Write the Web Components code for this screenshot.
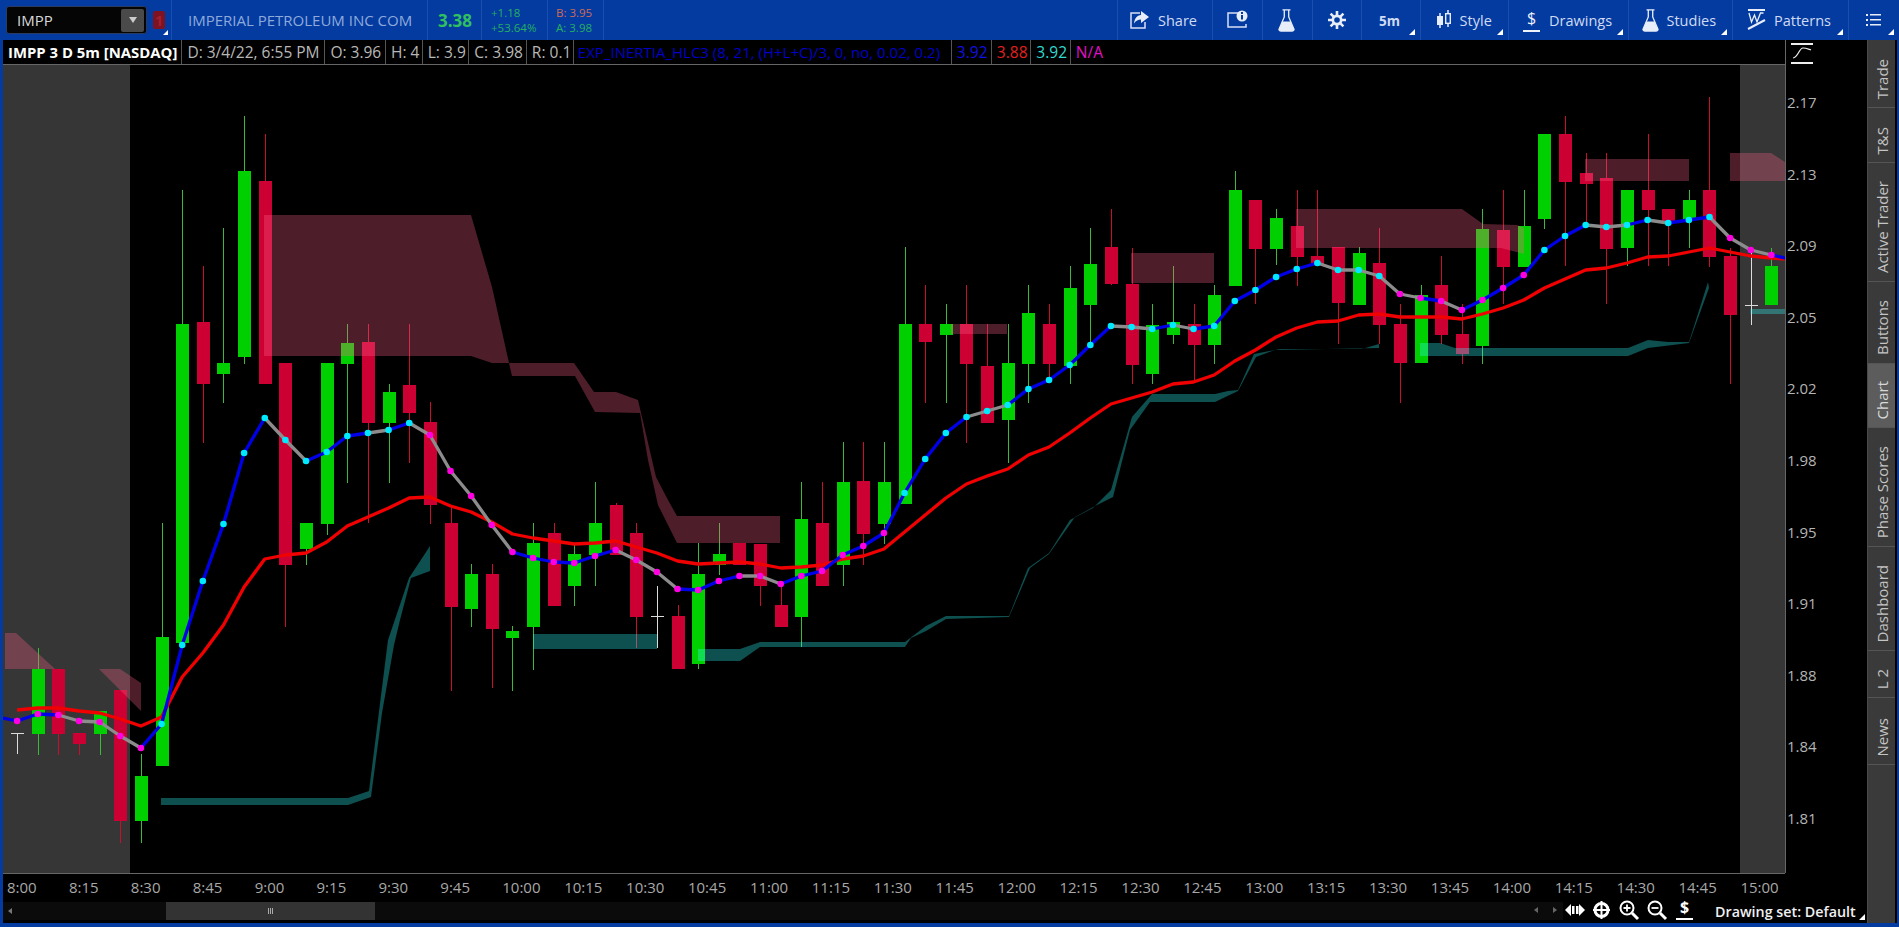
<!DOCTYPE html>
<html><head><meta charset="utf-8"><title>IMPP chart</title>
<style>
html,body{margin:0;padding:0;background:#043ba0;width:1899px;height:927px;overflow:hidden}
body{font-family:"Open Sans","Liberation Sans",sans-serif}
</style></head><body>
<tos-app></tos-app>
<script>
function def(name,css,html,init){
  customElements.define(name,class extends HTMLElement{
    constructor(){super();const r=this.attachShadow({mode:'open'});r.innerHTML='<style>'+css+'</style>'+(typeof html==='function'?html(this):html);}
    connectedCallback(){ if(init) init(this); }
  });
}
const triangle=':host([menu])::after{content:"";position:absolute;right:5px;bottom:5px;width:0;height:0;border-style:solid;border-width:0 0 6px 6px;border-color:transparent transparent #fff transparent}';

def('tos-tool',`:host{display:flex;align-items:center;position:relative;box-sizing:border-box;height:100%;border-left:1px solid #1a4fb0;padding-left:var(--pl,12px);gap:var(--gap,8px);color:#d0dbf2;font-size:14.5px;white-space:nowrap;flex:none;width:var(--w)}`+triangle,'<slot></slot>');

def('tos-dollar',`:host{display:inline-flex;justify-content:center;align-items:center;box-sizing:border-box;width:17px;height:23px;border-bottom:2px solid currentColor;color:#eef2fb;font-size:16px;line-height:1;font-weight:var(--fw,400);padding-bottom:2px;flex:none}`,'$');

def('tos-symbol',`:host{display:flex;align-items:center;flex:none;width:171px;height:100%;position:relative;padding-left:6px;box-sizing:border-box;gap:6px}
.box{width:141px;height:28px;background:#050505;border:1px solid #2a3a60;border-radius:3px;box-sizing:border-box;display:flex;align-items:center;justify-content:space-between;color:#d8d8d8;font-size:15px;padding:0 2px 0 10px}
.btn{width:23px;height:23px;background:#4a4a4a;border-radius:2px;display:flex;align-items:center;justify-content:center}
.btn i{display:block;width:0;height:0;border-style:solid;border-width:6px 4.5px 0 4.5px;border-color:#ccc transparent transparent transparent}
.b{width:12px;height:18px;background:#7d1222;border-radius:2px;color:#a0202f;font-size:15px;font-weight:700;display:flex;align-items:center;justify-content:center;line-height:1}
.c{position:absolute;right:3px;bottom:5px;width:0;height:0;border-style:solid;border-width:0 0 5px 5px;border-color:transparent transparent #fff transparent}`,
`<div class="box"><span>IMPP</span><span class="btn"><i></i></span></div><span class="b">1</span><span class="c"></span>`);

def('tos-quote',`:host{display:flex;flex:none;height:100%;color:#d0d0d0}
.c{border-left:1px solid #1a4fb0;box-sizing:border-box;height:100%;display:flex;flex-direction:column;justify-content:center}
.name{width:256px;padding-left:16px;color:#8eaadb;font-size:15px;white-space:nowrap}
.last{width:54px;padding-left:10px;color:#30c060;font-size:17px;font-weight:700}
.chg{width:66px;padding-left:9px;color:#23b060;font-size:11.5px;line-height:15px}
.ba{width:56px;padding-left:8px;font-size:11.5px;line-height:15px}
.end{width:1px;border-left:1px solid #1a4fb0}
.r{color:#cf6a55}.g{color:#23b060}`,
`<div class="c name">IMPERIAL PETROLEUM INC COM</div><div class="c last">3.38</div><div class="c chg"><span>+1.18</span><span>+53.64%</span></div><div class="c ba"><span class="r">B: 3.95</span><span class="g">A: 3.98</span></div><div class="c end"></div>`);

const ic={
 share:`<svg width="21" height="20" viewBox="0 0 21 20"><path d="M11 3H2v15h14v-6" fill="none" stroke="#d6e0f4" stroke-width="1.5"/><path d="M12 1l8 6-8 6V9.5c-3 0-5 1-7 4 .5-5 3-8 7-8.500z" fill="#e8eef9"/></svg>`,
 info:`<svg width="21" height="20" viewBox="0 0 21 20"><path d="M12 3H1v14h18v-3" fill="none" stroke="#d6e0f4" stroke-width="1.500"/><circle cx="15" cy="6" r="5.500" fill="#e8eef9"/><rect x="14" y="5" width="2" height="4.500" fill="#043ba0"/><rect x="14" y="2" width="2" height="2" fill="#043ba0"/></svg>`,
 flask:`<svg width="17" height="23" viewBox="0 0 19 26"><path d="M5 1h9M7 1v8L1 23q0 2 2 2h13q2 0 2-2L12 9V1" fill="none" stroke="#e8eef9" stroke-width="1.500"/><path d="M5 14h9l4 9q0 2-2 2H3q-2 0-2-2z" fill="#e8eef9"/></svg>`,
 gear:`<svg width="18" height="18" viewBox="0 0 18 18"><g stroke="#e8eef9" stroke-width="2.600"><path d="M9 0v18M0 9h18M2.600 2.600l12.800 12.800M15.400 2.600L2.600 15.400"/></g><circle cx="9" cy="9" r="5.500" fill="#e8eef9"/><circle cx="9" cy="9" r="2.800" fill="#043ba0"/></svg>`,
 style:`<svg width="16" height="22" viewBox="0 0 16 22"><path d="M4 4v15" stroke="#e8eef9" stroke-width="1.500"/><rect x="1" y="7" width="6" height="9" fill="#e8eef9"/><path d="M12 1v17" stroke="#e8eef9" stroke-width="1.500"/><rect x="9.700" y="4.700" width="4.600" height="9.600" fill="#043ba0" stroke="#e8eef9" stroke-width="1.400"/></svg>`,
 patterns:`<svg width="19" height="24" viewBox="0 0 19 24"><rect x="1" y="1" width="17" height="2" fill="#e8eef9"/><path d="M2 5l2.500 9 3-7 2.500 7 3.500-9 3 0" fill="none" stroke="#e8eef9" stroke-width="1.300"/><path d="M1 21L18 12" stroke="#e8eef9" stroke-width="2"/></svg>`,
 list:`<svg width="15" height="14" viewBox="0 0 15 14"><g fill="#e8eef9"><rect x="0" y="1" width="2" height="2"/><rect x="0" y="6" width="2" height="2"/><rect x="0" y="11" width="2" height="2"/><rect x="4" y="1" width="11" height="1.500"/><rect x="4" y="6" width="11" height="1.500"/><rect x="4" y="11" width="11" height="1.500"/></g></svg>`
};
const tool=(w,pl,icon,label,menu,extra)=>`<tos-tool ${menu?'menu':''} style="--w:${w}px;--pl:${pl}px;${extra||''}">${icon?(ic[icon]||icon):''}${label?`<span>${label}</span>`:''}</tos-tool>`;

def('tos-toolbar',`:host{display:flex;align-items:stretch;height:40px;background:#043ba0;flex:none}.sp{flex:1}`,
`<tos-symbol></tos-symbol><tos-quote></tos-quote><div class="sp"></div>`+
 tool(95,11,'share','Share')+tool(50,14,'info')+tool(49.5,15,'flask')+tool(49.5,15,'gear')+
 tool(58.6,17,null,'<b style="font-size:13.500px">5m</b>',1)+tool(88.4,15,'style','Style',1)+tool(119.5,14,'<tos-dollar></tos-dollar>','Drawings',1,'--gap:9px;')+
 tool(104.5,13,'flask','Studies',1)+tool(116,14,'patterns','Patterns',1)+tool(51,17,'list',null,1));

def('tos-info',`:host{display:flex;height:25px;box-sizing:border-box;background:#000;border-bottom:1px solid #666;flex:none;font-size:15.500px;color:#b8b8b8;white-space:nowrap;align-items:stretch}
span{display:flex;align-items:center;padding:0 5px;border-right:1px solid #555;box-sizing:border-box;flex:none}`,
`<span style="width:179.400px;padding-left:5px;color:#fff;font-weight:700;font-size:14.900px">IMPP 3 D 5m [NASDAQ]</span>
<span style="width:143px">D: 3/4/22, 6:55 PM</span><span style="width:60.700px">O: 3.96</span><span style="width:36.700px">H: 4</span><span style="width:46.600px">L: 3.9</span><span style="width:57.500px">C: 3.98</span><span style="width:47px">R: 0.1</span>
<span style="width:378px;color:#0000c8;padding-left:4px;font-size:15px">EXP_INERTIA_HLC3 (8, 21, (H+L+C)/3, 0, no, 0.02, 0.2)</span><span style="width:40px;color:#1010e0">3.92</span><span style="width:39.500px;color:#e02020">3.88</span><span style="width:39.500px;color:#30d8d0">3.92</span><span style="width:34px;color:#e010c8;border-right:0">N/A</span>`);

// Chart data: [type, wickTop, bodyTop, bodyBottom, wickBottom]
const C=[['d',733,733,733,754],['g',648,669,734,755],['r',669,669,734,755],['r',733,733,744,755],['g',711,711,734,755],['r',690,690,821,843],['g',754,776,821,843],['g',523,637,766,766],['g',190,324,643,643],['r',266,322,384,443],
['g',228,363,374,403],['g',116,171,357,364],['r',134,181,384,384],['r',363,363,565,627],['g',523,523,549,565],['g',363,363,524,535],['g',324,343,364,483],['r',324,342,423,523],['g',384,392,423,483],['r',324,385,413,463],
['r',402,422,505,524],['r',507,523,607,691],['g',564,574,609,627],['r',564,574,629,688],['g',626,631,638,691],['g',523,543,627,670],['r',523,533,606,606],['g',545,554,586,606],['g',482,523,555,586],['r',503,505,555,555],
['r',523,533,617,648],['d',586,616,616,648],['r',605,616,669,669],['g',543,574,664,669],['g',523,554,565,575],['r',543,543,565,565],['r',544,544,586,606],['r',586,605,627,627],['g',482,519,617,647],['r',482,523,586,586],
['g',442,482,565,586],['r',442,481,534,565],['g',442,482,524,544],['g',247,324,504,504],['r',285,324,342,403],['g',304,324,335,403],['r',285,324,364,443],['r',324,366,423,423],['g',324,363,420,463],['g',285,313,364,403],
['r',304,324,364,378],['g',266,288,366,384],['g',228,264,305,345],['r',209,247,284,285],['r',248,284,365,384],['g',304,325,374,384],['g',266,322,335,344],['r',304,324,345,380],['g',285,295,345,364],['g',171,190,286,286],
['r',200,200,249,304],['g',209,218,249,265],['r',190,226,257,286],['r',190,256,265,265],['r',247,247,303,344],['g',247,253,305,305],['r',228,263,325,344],['r',304,324,363,403],['g',285,295,363,363],['r',256,285,335,344],
['r',304,334,354,364],['g',209,229,346,364],['r',190,230,267,304],['g',190,226,267,267],['g',134,134,219,229],['r',116,134,182,266],['r',153,173,184,223],['r',153,178,249,304],['g',190,190,248,266],['r',134,190,210,266],
['r',209,209,222,266],['g',190,200,219,248],['r',97,190,257,267],['r',248,256,315,384],['d',250,305,305,325],['g',248,266,305,305]];
const X=i=>17.1+20.639*i;
const EMA=[710,708,708,711,713,719,726,717,677,653,625,587,559,555,553,542,526,517,508,498,497,506,512,522,534,538,541,544,543,541,547,553,561,564,563,562,564,568,567,565,559,556,549,532,515,498,484,476,469,455,447,433,418,404,398,392,384,382,375,361,350,337,328,322,321,315,314,317,317,317,319,314,308,300,288,279,270,268,263,257,256,252,248,252,256,258];
const IN=[721,714,715,721,722,736,748,724,645,581,524,453,418,440,461,452,436,433,430,423,435,471,496,525,552,558,562,563,556,550,560,572,589,590,581,576,576,584,576,571,555,546,533,493,459,433,417,411,405,389,380,365,345,326,327,329,325,329,326,301,290,277,269,263,270,270,276,294,298,301,310,300,288,275,250,236,225,227,225,220,223,220,217,238,250,255];
const MAG=new Set([0,1,2,3,4,5,6,20,21,22,23,24,25,26,27,28,29,30,31,32,33,34,35,36,37,38,39,40,41,42,67,68,69,70,71,72,73,83,84,85]);
const GRAY=new Set([2,3,4,5,12,13,17,19,20,21,22,23,29,30,31,35,36,46,47,53,54,56,63,64,65,66,67,69,76,77,79,82,83,84]);
const SUP=[[264,215,471,215,492,287,509,363,492,363,471,356,264,356],
[509,363,574,363,594,392,616,392,638,400,656,477,668,500,677,516,780,516,780,543,677,543,658,505,648,460,640,413,595,412,575,376,512,376],
[5,633,16,633,55,669,5,669],[99,669,120,669,141,683,141,711],[951,324,1007,324,1007,334,951,334],[1131,253,1214,253,1214,283,1131,283],
[1296,209,1462,209,1483,224,1517,225,1524,228,1524,254,1501,248,1296,248],[1585,159,1689,159,1689,181,1585,181],[1730,153,1771,153,1785,162,1785,181,1730,181]];
const DEM=[[161,798,348,798,369,791,388,640,409,578,430,546,430,571,411,578,400,620,394,645,382,713,371,797,348,805,161,805],
[533,634,657,634,657,649,533,649],
[698,649,740,649,760,642,905,642,926,626,946,616,1009,616,1028,568,1049,553,1070,520,1093,508,1111,490,1132,417,1152,394,1215,394,1228,391,1238,390,1254,354,1280,349,1362,349,1379,344,1379,348,1275,350,1256,357,1238,391,1215,402,1150,402,1130,430,1113,497,1097,505,1075,517,1049,554,1030,568,1009,617,946,619,926,631,911,638,905,647,760,647,740,661,698,661],
[1420,343,1440,343,1455,348,1628,348,1648,340,1668,342,1689,342,1708,282,1709,288,1689,343,1648,348,1628,356,1420,356],
[1750.500,309,1785,309,1785,314,1750.500,314]];

function chartSvg(){
  let s='<svg width="1782" height="808" viewBox="3 65 1782 808" xmlns="http://www.w3.org/2000/svg">';
  s+='<rect x="3" y="65" width="127" height="808" fill="#363636"/><rect x="1740" y="65" width="45" height="808" fill="#363636"/>';
  s+='<g shape-rendering="crispEdges">';
  C.forEach((c,i)=>{const x=Math.round(X(i));
    if(c[0]==='d'){
      const hy=c[2];
      s+=`<rect x="${x}" y="${c[1]}" width="1" height="${c[4]-c[1]}" fill="#dcdcdc"/><rect x="${x-6}" y="${hy}" width="13" height="1" fill="#dcdcdc"/>`;
      return;}
    const g=c[0]==='g';
    s+=`<rect x="${x}" y="${c[1]}" width="1" height="${c[4]-c[1]}" fill="${g?'#3cb83c':'#c8102e'}"/>`;
    s+=`<rect x="${x-6}" y="${c[2]}" width="13" height="${c[3]-c[2]}" fill="${g?'#00d000':'#cc0033'}"/>`;
  });
  s+='</g>';
  const poly=(p,f)=>`<polygon points="${p.join(' ')}" fill="${f}"/>`;
  SUP.forEach(p=>s+=poly(p,'rgba(255,100,140,.3)'));
  DEM.forEach(p=>s+=poly(p,'rgba(45,255,255,.31)'));
  const pts=EMA.map((y,i)=>X(i)+','+y).join(' ')+' 1785,259';
  s+=`<polyline points="${pts}" fill="none" stroke="#f00000" stroke-width="3.300" stroke-linejoin="round"/>`;
  s+=`<line x1="3" y1="718" x2="${X(0)}" y2="721" stroke="#0000e8" stroke-width="3.300"/>`;
  for(let i=0;i<IN.length;i++){
    const x2=i<85?X(i+1):1785,y2=i<85?IN[i+1]:258;
    s+=`<line x1="${X(i)}" y1="${IN[i]}" x2="${x2}" y2="${y2}" stroke="${GRAY.has(i)?'#8c8c8c':'#0000e8'}" stroke-width="3.300" stroke-linecap="round"/>`;
  }
  IN.forEach((y,i)=>{s+=`<circle cx="${X(i)}" cy="${y}" r="3.300" fill="${MAG.has(i)?'#ff00e0':'#00eaff'}"/>`;});
  return s+'</svg>';
}
def('tos-chart',`:host{display:block;height:808px;background:#000;overflow:hidden;flex:none}svg{display:block}`,chartSvg());

const prices=['2.17','2.13','2.09','2.05','2.02','1.98','1.95','1.91','1.88','1.84','1.81'];
def('tos-price-axis',`:host{display:flex;flex-direction:column;width:82px;flex:none;background:#000;border-left:1px solid #666;box-sizing:border-box;color:#b4b4b4;font-size:15px;height:833px}
svg{display:block;margin:3px 0 0 5px;flex:none}
.list{padding-top:27px;display:flex;flex-direction:column;padding-left:1px}
.list span{height:71.600px;line-height:22px;display:block;flex:none}`,
`<svg width="22" height="21" viewBox="0 0 22 21"><rect x="0" y="0" width="22" height="2" fill="#eee"/><rect x="0" y="19" width="22" height="2" fill="#eee"/><path d="M2 15C7 15 8 5 12 5C15 5 17 6 20 7" fill="none" stroke="#eee" stroke-width="1.200"/></svg><div class="list">${prices.map(p=>`<span>${p}</span>`).join('')}</div>`);

const times=['8:00','8:15','8:30','8:45','9:00','9:15','9:30','9:45','10:00','10:15','10:30','10:45','11:00','11:15','11:30','11:45','12:00','12:15','12:30','12:45','13:00','13:15','13:30','13:45','14:00','14:15','14:30','14:45','15:00'];
def('tos-time-axis',`:host{display:flex;height:28px;box-sizing:border-box;flex:none;background:#000;padding:0 0 3px 4px;color:#a8a8a8;font-size:15px;align-items:center}
span{width:61.920px;flex:none;display:block}`,times.map(t=>`<span>${t}</span>`).join(''));

def('tos-scrollbar',`:host{display:flex;height:18px;flex:none;background:#000;align-items:stretch}
.track{width:1560px;flex:none;background:#0b0b0b;display:flex;align-items:center;box-sizing:border-box;padding-left:5px}
.l{width:0;height:0;border-style:solid;border-width:3.500px 4px 3.500px 0;border-color:transparent #777 transparent transparent;flex:none}
.thumb{margin-left:154px;width:209px;height:100%;background:#333;display:flex;align-items:center;justify-content:center;gap:1px;flex:none}
.thumb i{display:block;width:1px;height:6px;background:#aaa}`,
`<div class="track"><span class="l"></span><div class="thumb"><i></i><i></i><i></i></div></div>`);

def('tos-nav',`:host{display:flex;align-items:center;position:absolute;right:0;top:0;height:18px;width:334px;box-sizing:border-box;color:#f0f0f0}
svg{display:block;flex:none}
tos-dollar{position:absolute;left:143px;top:-5px;--fw:700;color:#fff}
.t{font-size:14.300px;font-weight:600;white-space:nowrap;margin-left:17px}
.c{position:absolute;right:2px;bottom:0;width:0;height:0;border-style:solid;border-width:0 0 6px 6px;border-color:transparent transparent #fff transparent}`,
`<svg width="165" height="22" viewBox="0 0 165 22" style="margin-top:-2px">
<path d="M5 8l-4 3 4 3z" fill="#666"/><path d="M20 8l4 3-4 3z" fill="#666"/>
<path d="M32 11l6-6v12z" fill="#fff"/><rect x="39" y="7" width="2.500" height="8" fill="#fff"/><rect x="43" y="7" width="2.500" height="8" fill="#fff"/><path d="M52 11l-6-6v12z" fill="#fff"/>
<g transform="translate(60,2)"><circle cx="8.500" cy="9" r="6.500" fill="none" stroke="#fff" stroke-width="3"/><path d="M8.500 0v18M0 9h17" stroke="#fff" stroke-width="2"/></g>
<g transform="translate(86,1)" fill="none" stroke="#fff"><circle cx="8" cy="8" r="6.500" stroke-width="2"/><path d="M13 13l6 6" stroke-width="3"/><path d="M4.500 8h7M8 4.500v7" stroke-width="1.800"/></g>
<g transform="translate(114,1)" fill="none" stroke="#fff"><circle cx="8" cy="8" r="6.500" stroke-width="2"/><path d="M13 13l6 6" stroke-width="3"/><path d="M4.500 8h7" stroke-width="1.800"/></g>
</svg><tos-dollar></tos-dollar><span class="t">Drawing set: Default</span><span class="c"></span>`);

const tabs=[['Trade',68],['T&amp;S',55],['Active Trader',119],['Buttons',82],['Chart',64,1],['Phase Scores',119],['Dashboard',104],['L 2',47],['News',67]];
def('tos-tab',`:host{display:flex;flex-direction:column;justify-content:flex-end;align-items:center;box-sizing:border-box;flex:none;background:#3a3a3a;border-bottom:1px solid #555;color:#c4c4c4;font-size:15px;padding-bottom:8px;height:var(--h)}
:host([active]){background:#5c5c5c;color:#d8d8d8}
span{writing-mode:vertical-rl;transform:rotate(180deg);white-space:nowrap;display:block}`,'<span><slot></slot></span>');
def('tos-tabs',`:host{display:flex;flex-direction:column;width:28px;flex:none;background:#3a3a3a;border-left:1px solid #4a4a4a;box-sizing:border-box;height:883px}`,
 tabs.map(t=>`<tos-tab style="--h:${t[1]}px" ${t[2]?'active':''}>${t[0]}</tos-tab>`).join(''));

def('tos-app',`:host{display:flex;flex-direction:column;width:1899px;height:927px;background:#043ba0;overflow:hidden}
.main{display:flex;height:885px;padding:0 2px 2px 3px;box-sizing:border-box;flex:none}
.col{width:1864px;flex:none;display:flex;flex-direction:column;background:#000;height:883px}
.top{display:flex;flex:none}
.left{width:1782px;flex:none;display:flex;flex-direction:column}
.bar{height:1px;background:#666;width:1782px;flex:none}
.gap{width:2px;background:#000;flex:none}
.sb{position:relative;display:block;height:18px;flex:none}`,
`<tos-toolbar></tos-toolbar><div class="main"><div class="col"><div class="top"><div class="left"><tos-info></tos-info><tos-chart></tos-chart></div><tos-price-axis></tos-price-axis></div><div class="bar"></div><tos-time-axis></tos-time-axis><div class="sb"><tos-scrollbar></tos-scrollbar><tos-nav></tos-nav></div></div><tos-tabs></tos-tabs><div class="gap"></div></div>`);
</script>
</body></html>
